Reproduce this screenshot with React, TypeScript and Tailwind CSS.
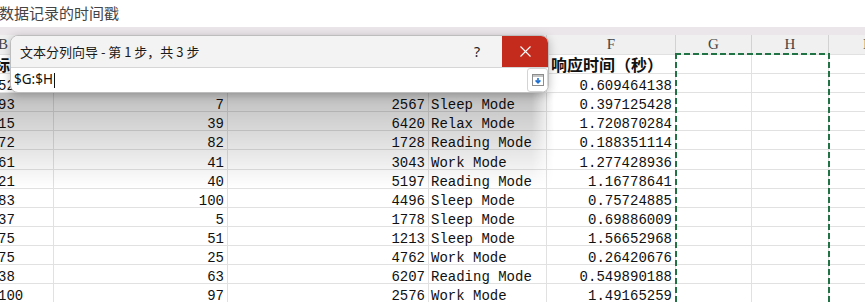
import React from "react";

type Row = { b: string; c: string; d: string; e: string; f: string };

const rows: Row[] = [
  { b: "52", c: "", d: "", e: "", f: "0.609464138" },
  { b: "93", c: "7", d: "2567", e: "Sleep Mode", f: "0.397125428" },
  { b: "15", c: "39", d: "6420", e: "Relax Mode", f: "1.720870284" },
  { b: "72", c: "82", d: "1728", e: "Reading Mode", f: "0.188351114" },
  { b: "61", c: "41", d: "3043", e: "Work Mode", f: "1.277428936" },
  { b: "21", c: "40", d: "5197", e: "Reading Mode", f: "1.16778641" },
  { b: "83", c: "100", d: "4496", e: "Sleep Mode", f: "0.75724885" },
  { b: "37", c: "5", d: "1778", e: "Sleep Mode", f: "0.69886009" },
  { b: "75", c: "51", d: "1213", e: "Sleep Mode", f: "1.56652968" },
  { b: "75", c: "25", d: "4762", e: "Work Mode", f: "0.26420676" },
  { b: "38", c: "63", d: "6207", e: "Reading Mode", f: "0.549890188" },
  { b: "100", c: "97", d: "2576", e: "Work Mode", f: "1.49165259" },
];

const cell = "h-full flex items-end whitespace-nowrap border-r border-[#e1e1e1] shrink-0";
const hcell = "h-full flex items-center justify-center whitespace-nowrap border-r border-[#d2d2d2] shrink-0";

export default function App() {
  return (
    <div className="relative w-[865px] h-[303px] overflow-hidden bg-white">
      {/* title strip */}
      <div className="h-[27px] flex items-center pb-[3px] -ml-[1px] text-[15px] text-[#444] font-['Noto_Sans_CJK_SC',sans-serif] leading-none">
        数据记录的时间戳
      </div>
      <div className="h-[8px] bg-[#ebe6ea]" />

      {/* column header row */}
      <div className="flex h-[19px] w-[903px] bg-[#f0f0f0] font-['Liberation_Serif',serif] text-[15px] text-[#444] leading-none">
        <div className={`${hcell} w-[54px] !justify-start`}><span className="-ml-[2px]">B</span></div>
        <div className={`${hcell} w-[174px]`} />
        <div className={`${hcell} w-[201px]`} />
        <div className={`${hcell} w-[118px]`} />
        <div className={`${hcell} w-[129px]`}>F</div>
        <div className={`${hcell} w-[76px]`}>G</div>
        <div className={`${hcell} w-[77px]`}>H</div>
        <div className={`${hcell} w-[74px]`}>I</div>
      </div>

      {/* header data row */}
      <div className="flex h-[19.1px] w-[903px] border-t border-[#e1e1e1] font-['Noto_Sans_CJK_SC',sans-serif] font-bold text-[16px] text-[#111] leading-none">
        <div className={`${cell} !items-center w-[54px]`}><span className="-ml-[6px]">标</span></div>
        <div className={`${cell} w-[174px]`} />
        <div className={`${cell} w-[201px]`} />
        <div className={`${cell} w-[118px]`} />
        <div className={`${cell} !items-center w-[129px] pl-[4px]`}>响应时间（秒）</div>
        <div className={`${cell} w-[76px]`} />
        <div className={`${cell} w-[77px]`} />
        <div className={`${cell} w-[74px]`} />
      </div>

      {/* data rows */}
      {rows.map((r, i) => (
        <div
          key={i}
          className="flex h-[19.1px] w-[903px] border-t border-[#e1e1e1] font-['Liberation_Mono',monospace] text-[14px] text-[#111] leading-[12px]"
        >
          <div className={`${cell} w-[54px]`}><span className="-ml-[2px]">{r.b}</span></div>
          <div className={`${cell} w-[174px] justify-end pr-[3px]`}>{r.c}</div>
          <div className={`${cell} w-[201px] justify-end pr-[3px]`}>{r.d}</div>
          <div className={`${cell} w-[118px] pl-[2px]`}>{r.e}</div>
          <div className={`${cell} w-[129px] justify-end pr-[3px]`}>{r.f}</div>
          <div className={`${cell} w-[76px]`} />
          <div className={`${cell} w-[77px]`} />
          <div className={`${cell} w-[74px]`} />
        </div>
      ))}

      {/* dialog shadow cast on the sheet */}
      <div className="absolute left-0 top-[93px] w-[554px] h-[95px] bg-[linear-gradient(to_bottom,rgba(0,0,0,0.25),rgba(0,0,0,0))] [mask-image:linear-gradient(to_right,#000_96%,transparent)]" />

      {/* copy marquee */}
      <div className="absolute left-[675px] top-[53px] w-[155px] h-[2px] bg-[repeating-linear-gradient(to_right,#217346_0px,#217346_6px,transparent_6px,transparent_9px)]" />
      <div className="absolute left-[675px] top-[53px] w-[2px] h-[250px] bg-[repeating-linear-gradient(to_bottom,#217346_0px,#217346_6px,transparent_6px,transparent_9px)]" />
      <div className="absolute left-[828px] top-[53px] w-[2px] h-[250px] bg-[repeating-linear-gradient(to_bottom,#217346_0px,#217346_6px,transparent_6px,transparent_9px)]" />

      {/* dialog */}
      <div className="absolute left-[10px] top-[35px] w-[539px] h-[58px] flex flex-col overflow-hidden rounded-[8px] border border-[#bdbdbd] bg-white shadow-[0_2px_10px_rgba(0,0,0,0.25)]">
        <div className="h-[31px] flex items-center bg-[#f3f3f3] shrink-0">
          <div className="flex-1 pl-[9px] text-[13px] text-[#1a1a1a] font-['Noto_Sans_CJK_SC',sans-serif] leading-none">
            文本分列向导 - 第 1 步，共 3 步
          </div>
          <div className="w-[46px] h-full flex items-center justify-center pr-[4px] text-[14px] text-[#222] font-['Noto_Sans',sans-serif]">
            ?
          </div>
          <div className="w-[46px] h-full flex items-center justify-center bg-[#c42b1c]">
            <svg width="11" height="11" viewBox="0 0 11 11">
              <path d="M0.5 0.5 L10.5 10.5 M10.5 0.5 L0.5 10.5" stroke="#fff" strokeWidth="1.1" fill="none" />
            </svg>
          </div>
        </div>
        <div className="flex-1 flex items-center border-t border-[#d6d6d6] pl-[3px] pr-[0px]">
          <span className="text-[13.5px] text-[#111] font-['Noto_Sans',sans-serif] leading-none">$G:$H</span>
          <span className="ml-[1px] w-px h-[15px] bg-[#111]" />
          <div className="ml-auto w-[21px] h-[24px] flex items-center justify-center rounded-[3px] border border-[#d4d4d4] bg-white">
            <svg width="12" height="12" viewBox="0 0 12 12">
              <rect x="0.5" y="0.5" width="11" height="11" fill="#fff" stroke="#8c8c8c" />
              <rect x="1" y="1" width="10" height="2" fill="#c4c4c4" />
              <path d="M6 4 V8.5 M3.6 6.4 L6 8.8 L8.4 6.4" stroke="#1e6fd0" strokeWidth="1.6" fill="none" />
            </svg>
          </div>
        </div>
      </div>
    </div>
  );
}
